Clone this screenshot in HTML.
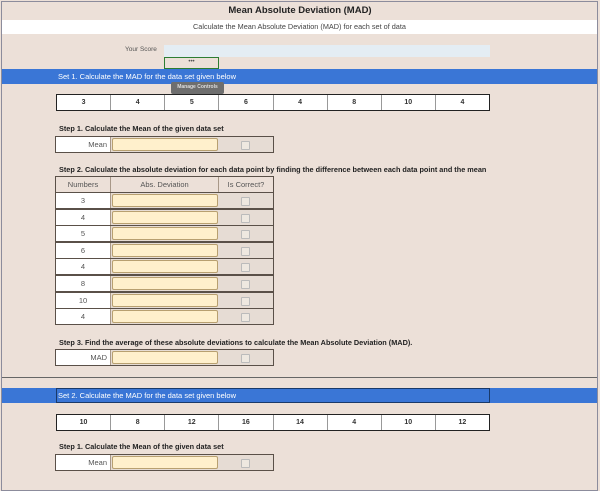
<!DOCTYPE html>
<html><head><meta charset="utf-8"><style>
*{margin:0;padding:0;box-sizing:border-box}
body{width:600px;height:481px;background:#ece0d8;font-family:"Liberation Sans",sans-serif;position:relative;overflow:hidden}
.a{position:absolute}
.frame{left:1px;top:1px;width:597px;height:490px;border:1px solid #8c8c9c}
.t{font-size:7.3px;color:#333}
.b{font-weight:bold;color:#222}
.dt{left:56px;width:434px;height:17px;border:1px solid #222;background:#fff;display:flex}
.dt div{flex:1;border-right:1px solid #999;font-size:7px;font-weight:bold;color:#333;text-align:center;line-height:15px}
.dt div:last-child{border-right:none}
.r{left:55px;width:219px;height:17px;border:1px solid #5a5048;display:flex;background:#e6dcd4}
.r .l{width:55px;background:#fff;font-size:7.5px;color:#555;line-height:15px;text-align:right;padding-right:3px;border-right:1px solid #a89888}
.r .l.c{text-align:center;padding:0}
.r .i{width:106px;margin:1px 1px;background:#fff0cc;border:1px solid #b8a070;border-radius:2px}
.r .k{flex:1;position:relative}
.r .k:after{content:"";position:absolute;left:22px;top:4px;width:7px;height:7px;border:1px solid #bbb;background:#eee8e0;border-radius:1px}
.bar{left:2px;width:595px;height:15px;background:#3a76d6;color:#fff;font-size:7.5px;line-height:15px;padding-left:56px}
</style></head><body>
<div class="a frame"></div>
<div class="a b" style="left:0;top:5px;width:600px;text-align:center;font-size:9.5px">Mean Absolute Deviation (MAD)</div>
<div class="a" style="left:2px;top:20px;width:595px;height:14px;background:#fff;font-size:7.3px;color:#444;text-align:center;line-height:14px">Calculate the Mean Absolute Deviation (MAD) for each set of data</div>
<div class="a t" style="left:125px;top:46px;font-size:6.5px;color:#555">Your Score</div>
<div class="a" style="left:164px;top:45px;width:326px;height:12px;background:#e4edf4"></div>
<div class="a" style="left:164px;top:57px;width:55px;height:12px;border:1.5px solid #2e7d32;background:#ece0d8;font-size:6px;text-align:center;line-height:9px;color:#555">•••</div>
<div class="a bar" style="top:69px">Set 1. Calculate the MAD for the data set given below</div>
<div class="a" style="left:171px;top:82px;width:53px;height:12px;background:#6e6e6e;color:#ddd;font-size:5px;font-weight:bold;text-align:center;line-height:10px;border-radius:2px">Manage Controls</div>
<div class="a dt" style="top:94px"><div>3</div><div>4</div><div>5</div><div>6</div><div>4</div><div>8</div><div>10</div><div>4</div></div>
<div class="a t b" style="left:59px;top:124px">Step 1. Calculate the Mean of the given data set</div>
<div class="a r" style="top:136px"><div class="l">Mean</div><div class="i"></div><div class="k"></div></div>
<div class="a t b" style="left:59px;top:165px">Step 2. Calculate the absolute deviation for each data point by finding the difference between each data point and the mean</div>
<div class="a" style="left:55px;top:176px;width:219px;height:17px;border:1px solid #5a5048;display:flex;font-size:7.5px;color:#555;line-height:15px;text-align:center">
<div style="width:55px;border-right:1px solid #a89888">Numbers</div><div style="width:108px;border-right:1px solid #a89888">Abs. Deviation</div><div style="flex:1">Is Correct?</div></div>
<div class="a r" style="top:192px"><div class="l c">3</div><div class="i"></div><div class="k"></div></div>
<div class="a r" style="top:208.6px"><div class="l c">4</div><div class="i"></div><div class="k"></div></div>
<div class="a r" style="top:225.2px"><div class="l c">5</div><div class="i"></div><div class="k"></div></div>
<div class="a r" style="top:241.8px"><div class="l c">6</div><div class="i"></div><div class="k"></div></div>
<div class="a r" style="top:258.4px"><div class="l c">4</div><div class="i"></div><div class="k"></div></div>
<div class="a r" style="top:275px"><div class="l c">8</div><div class="i"></div><div class="k"></div></div>
<div class="a r" style="top:291.6px"><div class="l c">10</div><div class="i"></div><div class="k"></div></div>
<div class="a r" style="top:308.2px"><div class="l c">4</div><div class="i"></div><div class="k"></div></div>
<div class="a t b" style="left:59px;top:338px">Step 3. Find the average of these absolute deviations to calculate the Mean Absolute Deviation (MAD).</div>
<div class="a r" style="top:349px"><div class="l">MAD</div><div class="i"></div><div class="k"></div></div>
<div class="a" style="left:2px;top:377px;width:595px;height:1px;background:#666"></div>
<div class="a bar" style="top:388px">Set 2. Calculate the MAD for the data set given below</div>
<div class="a" style="left:56px;top:388px;width:434px;height:15px;border:1px solid #1a3a6a"></div>
<div class="a dt" style="top:414px"><div>10</div><div>8</div><div>12</div><div>16</div><div>14</div><div>4</div><div>10</div><div>12</div></div>
<div class="a t b" style="left:59px;top:442px">Step 1. Calculate the Mean of the given data set</div>
<div class="a r" style="top:454px"><div class="l">Mean</div><div class="i"></div><div class="k"></div></div>
</body></html>
